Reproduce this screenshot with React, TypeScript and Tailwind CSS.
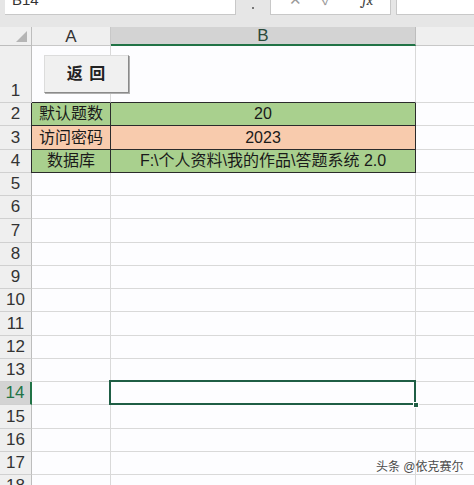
import React from "react";

const FONT = '"Liberation Sans", "Noto Sans CJK SC", Arial, sans-serif';
const GRID = "border-[#d9d9d9]";
const COLS = "grid grid-cols-[32px_79px_305px_1fr]";

type Row = {
  n: number;
  h: number;
  a?: string;
  b?: string;
  fill?: string;
};

const heights = [23, 24, 23, 23, 23, 24, 23, 23, 23, 24, 23, 23, 23, 24, 23, 23, 23];

const rows: Row[] = heights.map((h, i) => ({ n: i + 2, h }));
rows[0] = { ...rows[0], a: "默认题数", b: "20", fill: "bg-[#a9d08e]" };
rows[1] = { ...rows[1], a: "访问密码", b: "2023", fill: "bg-[#f8cbad]" };
rows[2] = { ...rows[2], a: "数据库", b: "F:\\个人资料\\我的作品\\答题系统 2.0", fill: "bg-[#a9d08e]" };

function FormulaBar() {
  return (
    <div className="h-[27px] bg-[#e6e6e6]">
      <div className="flex h-[15px]">
        <div className="ml-[5px] w-[231px] h-full bg-white border-b border-r border-[#c8c8c8] overflow-hidden">
          <div className="-mt-[10px] pl-[7px] text-[15px] leading-[20px] text-[#333]">B14</div>
        </div>
        <div className="w-[34px] flex justify-center">
          <div className="mt-[7px] w-[2px] h-[2px] bg-[#777]" />
        </div>
        <div className="w-[121px] h-full bg-white border-b border-l border-r border-[#c8c8c8] overflow-hidden flex text-[#9a9a9a]">
          <div className="-mt-[10px] ml-[18px] text-[15px] leading-[20px]">✕</div>
          <div className="-mt-[10px] ml-[20px] text-[15px] leading-[20px]">✓</div>
          <div className="-mt-[10px] ml-[30px] text-[15px] leading-[20px] italic font-serif text-[#444]">fx</div>
        </div>
        <div className="ml-[5px] flex-1 h-full bg-white border-b border-l border-[#c8c8c8]" />
      </div>
    </div>
  );
}

function ColumnHeader() {
  return (
    <div className={`${COLS} h-[19px] text-[17px] text-[#333] leading-none`}>
      <div className="relative bg-[#efefef] border-r border-b border-[#bdbdbd]">
        <svg className="absolute left-[16px] top-[4px]" width="11" height="11" viewBox="0 0 11 11">
          <polygon points="11,0 11,11 0,11" fill="#b5b5b5" />
        </svg>
      </div>
      <div className="bg-[#efefef] border-r border-b border-[#c8c8c8] flex items-center justify-center">A</div>
      <div className="bg-[#d3d3d3] border-r border-[#bdbdbd] border-b-2 border-b-[#217346] flex items-center justify-center text-[#2a4a3a]">
        B
      </div>
      <div className="bg-[#efefef] border-b border-[#c8c8c8]" />
    </div>
  );
}

function FirstRow() {
  return (
    <div className={`${COLS} h-[57px]`}>
      <div className="bg-[#efefef] border-r border-r-[#bdbdbd] border-b border-b-[#d0d0d0] flex items-end justify-center pb-[1px] text-[17px] leading-[20px] text-[#333]">
        1
      </div>
      <div className={`relative border-r border-b ${GRID} border-b-[#2b2b2b]`}>
        <div className="absolute left-[12px] top-[9px] w-[85px] h-[38px] bg-[#f0f0f0] border border-[#dcdcdc] border-r-[#8a8a8a] border-b-[#8a8a8a] shadow-[1px_1px_0_#b0b0b0] flex items-center justify-center text-[16px] font-bold text-[#222] tracking-[1px]">
          返 回
        </div>
      </div>
      <div className={`border-r border-b ${GRID} border-b-[#2b2b2b]`} />
      <div className={`border-b ${GRID}`} />
    </div>
  );
}

function DataRow({ row }: { row: Row }) {
  const selected = row.n === 14;
  const framed = !!row.fill;
  return (
    <div className={COLS} style={{ height: row.h }}>
      <div
        className={`flex items-end justify-center pb-[1px] text-[17px] leading-[20px] border-b border-b-[#d0d0d0] ${
          selected
            ? "bg-[#d3d3d3] text-[#217346] border-r-2 border-r-[#217346]"
            : "bg-[#efefef] text-[#333] border-r border-r-[#bdbdbd]"
        }`}
      >
        {row.n}
      </div>
      <div
        className={
          framed
            ? `${row.fill} border-l border-r border-b border-[#2b2b2b] -ml-px flex items-end justify-center pb-[1px] text-[16px] text-[#1a1a1a] leading-[20px]`
            : `border-r border-b ${GRID}`
        }
      >
        {row.a}
      </div>
      <div
        className={
          framed
            ? `${row.fill} border-r border-b border-[#2b2b2b] flex items-end justify-center pb-[1px] text-[16px] text-[#1a1a1a] leading-[20px]`
            : selected
            ? "relative border-r border-b border-[#d9d9d9]"
            : `border-r border-b ${GRID}`
        }
      >
        {row.b}
        {selected && (
          <>
            <div className="absolute -left-[2px] -top-[2px] -right-[1px] -bottom-[1px] border-2 border-[#1f5e45]" />
            <div className="absolute -right-[4px] -bottom-[4px] w-[6px] h-[6px] bg-[#1f5e45] border border-white" />
          </>
        )}
      </div>
      <div className={`border-b ${GRID}`} />
    </div>
  );
}

export default function App() {
  return (
    <div className="relative w-[474px] h-[485px] overflow-hidden bg-[#fdfdff]" style={{ fontFamily: FONT }}>
      <FormulaBar />
      <ColumnHeader />
      <FirstRow />
      {rows.map((r) => (
        <DataRow key={r.n} row={r} />
      ))}
      <div
        className="absolute left-[376px] top-[461px] whitespace-nowrap text-[12px] text-[#4a4a4a] leading-none"
        style={{ textShadow: "0 0 2px #fff, 0 0 2px #fff" }}
      >
        头条 @依克赛尔
      </div>
    </div>
  );
}
